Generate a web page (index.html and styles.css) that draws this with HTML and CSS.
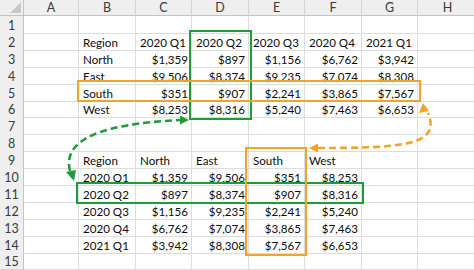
FILE: index.html
```html
<!DOCTYPE html>
<html>
<head>
<meta charset="utf-8">
<link rel="stylesheet" href="styles.css">
</head>
<body>
<div class="sheet">
  <div class="row hdr">
    <div class="corner"><span class="tri"></span></div>
    <div class="ch">A</div><div class="ch">B</div><div class="ch">C</div><div class="ch">D</div><div class="ch">E</div><div class="ch">F</div><div class="ch">G</div><div class="ch">H</div>
  </div>
  <div class="row"><div class="rh">1</div><div class="c"></div><div class="c"></div><div class="c"></div><div class="c"></div><div class="c"></div><div class="c"></div><div class="c"></div><div class="c"></div></div>
  <div class="row"><div class="rh">2</div><div class="c"></div><div class="c">Region</div><div class="c">2020 Q1</div><div class="c">2020 Q2</div><div class="c">2020 Q3</div><div class="c">2020 Q4</div><div class="c">2021 Q1</div><div class="c"></div></div>
  <div class="row"><div class="rh">3</div><div class="c"></div><div class="c">North</div><div class="c n">$1,359</div><div class="c n">$897</div><div class="c n">$1,156</div><div class="c n">$6,762</div><div class="c n">$3,942</div><div class="c"></div></div>
  <div class="row"><div class="rh">4</div><div class="c"></div><div class="c">East</div><div class="c n">$9,506</div><div class="c n">$8,374</div><div class="c n">$9,235</div><div class="c n">$7,074</div><div class="c n">$8,308</div><div class="c"></div></div>
  <div class="row"><div class="rh">5</div><div class="c"></div><div class="c">South</div><div class="c n">$351</div><div class="c n">$907</div><div class="c n">$2,241</div><div class="c n">$3,865</div><div class="c n">$7,567</div><div class="c"></div></div>
  <div class="row"><div class="rh">6</div><div class="c"></div><div class="c">West</div><div class="c n">$8,253</div><div class="c n">$8,316</div><div class="c n">$5,240</div><div class="c n">$7,463</div><div class="c n">$6,653</div><div class="c"></div></div>
  <div class="row"><div class="rh">7</div><div class="c"></div><div class="c"></div><div class="c"></div><div class="c"></div><div class="c"></div><div class="c"></div><div class="c"></div><div class="c"></div></div>
  <div class="row"><div class="rh">8</div><div class="c"></div><div class="c"></div><div class="c"></div><div class="c"></div><div class="c"></div><div class="c"></div><div class="c"></div><div class="c"></div></div>
  <div class="row"><div class="rh">9</div><div class="c"></div><div class="c">Region</div><div class="c">North</div><div class="c">East</div><div class="c">South</div><div class="c">West</div><div class="c"></div><div class="c"></div></div>
  <div class="row"><div class="rh">10</div><div class="c"></div><div class="c">2020 Q1</div><div class="c n">$1,359</div><div class="c n">$9,506</div><div class="c n">$351</div><div class="c n">$8,253</div><div class="c"></div><div class="c"></div></div>
  <div class="row"><div class="rh">11</div><div class="c"></div><div class="c">2020 Q2</div><div class="c n">$897</div><div class="c n">$8,374</div><div class="c n">$907</div><div class="c n">$8,316</div><div class="c"></div><div class="c"></div></div>
  <div class="row"><div class="rh">12</div><div class="c"></div><div class="c">2020 Q3</div><div class="c n">$1,156</div><div class="c n">$9,235</div><div class="c n">$2,241</div><div class="c n">$5,240</div><div class="c"></div><div class="c"></div></div>
  <div class="row"><div class="rh">13</div><div class="c"></div><div class="c">2020 Q4</div><div class="c n">$6,762</div><div class="c n">$7,074</div><div class="c n">$3,865</div><div class="c n">$7,463</div><div class="c"></div><div class="c"></div></div>
  <div class="row"><div class="rh">14</div><div class="c"></div><div class="c">2021 Q1</div><div class="c n">$3,942</div><div class="c n">$8,308</div><div class="c n">$7,567</div><div class="c n">$6,653</div><div class="c"></div><div class="c"></div></div>
  <div class="row"><div class="rh">15</div><div class="c"></div><div class="c"></div><div class="c"></div><div class="c"></div><div class="c"></div><div class="c"></div><div class="c"></div><div class="c"></div></div>

  <svg class="overlay" width="474" height="270" viewBox="0 0 474 270">
    <g fill="none" stroke-width="2">
      <rect class="g" x="190" y="31" width="61" height="88"/>
      <rect class="o" x="78" y="81" width="342" height="20"/>
      <rect class="g" x="77" y="183" width="286" height="20"/>
      <rect class="o" x="246" y="148" width="60" height="107"/>
    </g>
    <g fill="none" stroke-width="2.6" stroke-dasharray="7 4">
      <path class="g" d="M70 171 C62 140, 100 124, 180 120"/>
      <path class="o" d="M318 148 C400 148, 442 146, 428 113"/>
    </g>
    <polygon class="gf" points="189,120 180,115.5 180,124.5"/>
    <polygon class="gf" points="74,181 66,172 76,170"/>
    <polygon class="of" points="309,148 318,143.5 318,152.5"/>
    <polygon class="of" points="423,103 419,113 429,111"/>
  </svg>
</div>
</body>
</html>
```
FILE: styles.css
```css
html, body {
  margin: 0;
  padding: 0;
  background: #ffffff;
}
.sheet {
  position: relative;
  width: 474px;
  height: 270px;
  overflow: hidden;
  font-family: "Lato", "Open Sans", sans-serif;
  font-size: 11.6px;
  color: #0c0c0c;
}
.row {
  display: grid;
  grid-template-columns: 24px 55px 57px 56px 57px 56px 57px 56px 60px;
  height: 16.9px;
}
.row.hdr {
  height: 16px;
}
.c, .rh, .ch, .corner {
  box-sizing: border-box;
  border-right: 1px solid #dcdcdc;
  border-bottom: 1px solid #dcdcdc;
  white-space: nowrap;
  overflow: visible;
  line-height: 15px;
  padding-top: 2px;
}
.c {
  padding-left: 4px;
  padding-right: 3px;
}
.c.n {
  text-align: right;
}
.rh {
  background: #efefef;
  color: #3a3a3a;
  text-align: center;
  font-size: 12.5px;
  border-right-color: #c4c4c4;
  border-bottom-color: #d4d4d4;
}
.ch {
  background: #efefef;
  color: #3a3a3a;
  text-align: center;
  font-size: 12.5px;
  padding-top: 0;
  line-height: 15px;
  border-bottom-color: #c4c4c4;
  border-right-color: #d4d4d4;
}
.corner {
  background: #efefef;
  position: relative;
  border-bottom-color: #c4c4c4;
  border-right-color: #c4c4c4;
}
.tri {
  position: absolute;
  right: 2px;
  bottom: 2px;
  width: 0;
  height: 0;
  border-left: 11px solid transparent;
  border-bottom: 11px solid #c9c9c9;
}
.overlay {
  position: absolute;
  left: 0;
  top: 0;
  pointer-events: none;
}
.g { stroke: #1f9b3a; }
.o { stroke: #f2a428; }
.gf { fill: #1f9b3a; }
.of { fill: #f2a428; }
```
